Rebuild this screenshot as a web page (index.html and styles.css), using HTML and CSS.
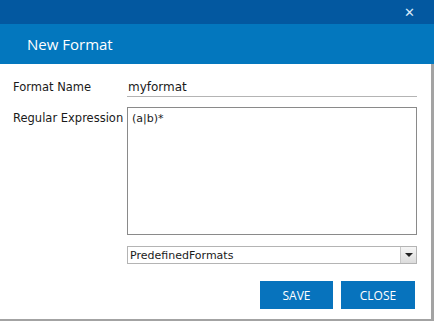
FILE: index.html
```html
<!DOCTYPE html>
<html lang="en">
<head>
    <meta charset="UTF-8">
    <title>New Format</title>
    <link rel="stylesheet" href="styles.css">
</head>
<body>
    <div class="dialog">
        <div class="titlebar">
            <span class="close-x">&#x2715;</span>
        </div>
        <div class="header">New Format</div>

        <div class="content">
            <div class="form">
                <label class="label name-label">Format Name</label>
                <div class="name-field">myformat</div>

                <label class="label regex-label">Regular Expression</label>
                <div class="regex-field">
                    <div class="regex-box">(a|b)*</div>
                    <div class="select">
                        <span class="select-text">PredefinedFormats</span>
                        <span class="select-arrow"></span>
                    </div>
                </div>
            </div>

            <div class="buttons">
                <button class="btn">SAVE</button>
                <button class="btn">CLOSE</button>
            </div>
        </div>
    </div>
</body>
</html>
```

FILE: styles.css
```css
body, html {
    margin: 0;
    width: 434px;
    height: 321px;
    overflow: hidden;
    background: #ffffff;
    font-family: "DejaVu Sans", Tahoma, sans-serif;
    color: #1a1a1a;
}
.dialog {
    width: 434px;
    height: 321px;
    display: flex;
    flex-direction: column;
}
.titlebar {
    height: 24px;
    background-color: #0358a0;
    display: flex;
    justify-content: flex-end;
    align-items: center;
    padding-right: 19px;
}
.close-x {
    color: #d8e8f8;
    font-size: 13px;
    font-weight: bold;
}
.header {
    height: 40px;
    line-height: 40px;
    padding-left: 27px;
    background-color: #0377be;
    color: #ffffff;
    font-family: "Open Sans", sans-serif;
    font-size: 15px;
}
.content {
    flex: 1;
    box-sizing: border-box;
    border-right: 3px solid #a3a3a3;
    border-bottom: 2px solid #a3a3a3;
    padding: 13px 0 0 13px;
}
.form {
    display: grid;
    grid-template-columns: 114px 290px;
    row-gap: 10px;
}
.label {
    font-size: 11.5px;
}
.name-label {
    padding-top: 3px;
}
.regex-label {
    padding-top: 4px;
}
.name-field {
    height: 20px;
    box-sizing: border-box;
    border-bottom: 1px solid #b4b4b4;
    padding-left: 1px;
    font-size: 12px;
    line-height: 20px;
}
.regex-box {
    height: 128px;
    box-sizing: border-box;
    border: 1px solid #8a8a8a;
    padding: 4px 4px;
    font-size: 11px;
}
.select {
    margin-top: 11px;
    height: 18px;
    box-sizing: border-box;
    border: 1px solid #b4b4b4;
    display: flex;
    align-items: center;
    justify-content: space-between;
    font-size: 11px;
}
.select-text {
    padding-left: 2px;
}
.select-arrow {
    width: 15px;
    height: 16px;
    background: linear-gradient(#f6f6f6, #dcdcdc);
    border-left: 1px solid #c8c8c8;
    display: flex;
    align-items: center;
    justify-content: center;
}
.select-arrow::after {
    content: "";
    border-left: 4px solid transparent;
    border-right: 4px solid transparent;
    border-top: 4px solid #222222;
}
.buttons {
    display: flex;
    justify-content: flex-end;
    gap: 8px;
    margin-top: 17px;
    padding-right: 16px;
}
.btn {
    width: 73px;
    height: 28px;
    background-color: #0773bd;
    color: #ffffff;
    border: none;
    font-family: "Open Sans", sans-serif;
    font-size: 12px;
    padding: 0;
}
.btn + .btn {
    width: 74px;
}
```
